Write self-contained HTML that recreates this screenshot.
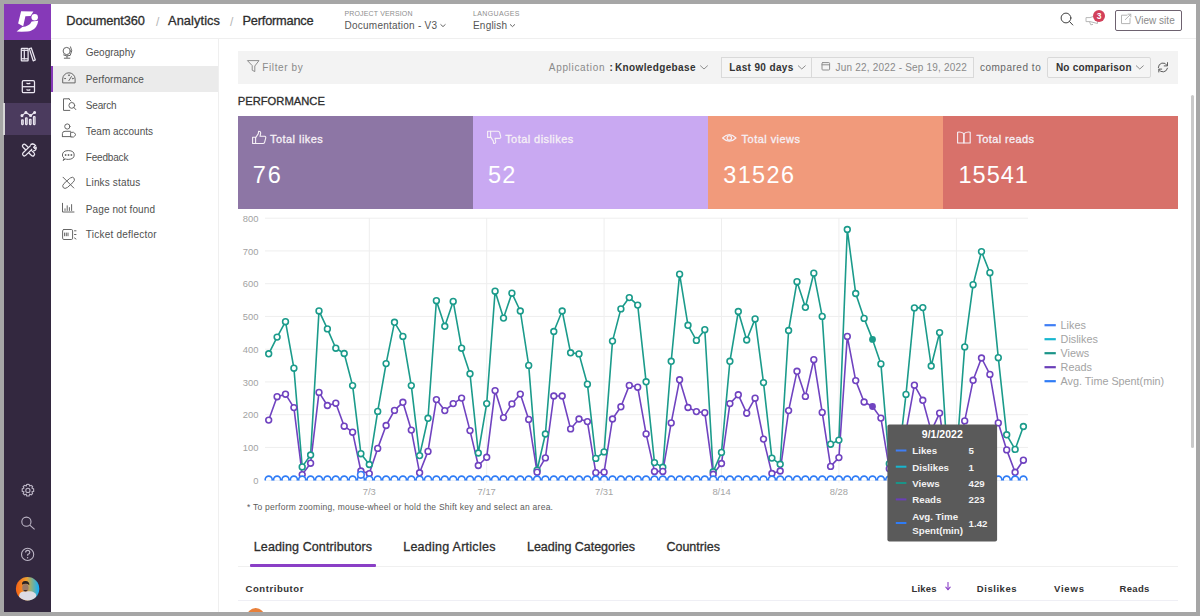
<!DOCTYPE html>
<html><head><meta charset="utf-8">
<style>
*{box-sizing:border-box;margin:0;padding:0}
html,body{width:1200px;height:616px;overflow:hidden;background:#fff;font-family:"Liberation Sans",sans-serif}
.a{position:absolute}
.t{position:absolute;white-space:nowrap;line-height:1}
</style></head><body>
<!-- frame border -->
<div class="a" style="left:0;top:0;width:1200px;height:616px;border:4px solid #a6a6a6;border-top-width:4px"></div>
<!-- rail -->
<div class="a" style="left:4px;top:4px;width:47px;height:608px;background:#33283f"></div>
<div class="a" style="left:4px;top:4px;width:47px;height:36px;background:#8639b8"></div>
<div class="a" style="left:4px;top:103px;width:47px;height:32px;background:#4b3b5e"></div>
<div class="a" style="left:3px;top:103px;width:2px;height:32px;background:#d6d6d6"></div>
<!-- header -->
<div class="a" style="left:51px;top:38px;width:1145px;height:1px;background:#efefef"></div>
<div class="a" style="left:218px;top:39px;width:1px;height:573px;background:#efefef"></div>
<div class="t" style="left:66.30px;top:15.16px;font-size:12.8px;color:#2d2d2d;letter-spacing:-0.100px;-webkit-text-stroke:0.3px currentColor;">Document360</div>
<div class="t" style="left:156.00px;top:15.84px;font-size:12px;color:#b5b5b5;">/</div>
<div class="t" style="left:168.00px;top:15.16px;font-size:12.8px;color:#2d2d2d;letter-spacing:0.098px;-webkit-text-stroke:0.3px currentColor;">Analytics</div>
<div class="t" style="left:230.00px;top:15.84px;font-size:12px;color:#b5b5b5;">/</div>
<div class="t" style="left:242.50px;top:15.16px;font-size:12.8px;color:#2d2d2d;letter-spacing:-0.208px;-webkit-text-stroke:0.3px currentColor;">Performance</div>
<div class="t" style="left:344.50px;top:10.37px;font-size:7px;color:#8e8e8e;letter-spacing:0.143px;">PROJECT VERSION</div>
<div class="t" style="left:344.50px;top:20.84px;font-size:10px;color:#555;letter-spacing:0.242px;">Documentation - V3</div>
<div class="t" style="left:473.00px;top:10.37px;font-size:7px;color:#8e8e8e;letter-spacing:0.366px;">LANGUAGES</div>
<div class="t" style="left:473.00px;top:20.84px;font-size:10px;color:#555;letter-spacing:0.200px;">English</div>
<div class="a" style="left:1115px;top:10px;width:67px;height:21px;border:1.3px solid #6e6270;border-radius:2px"></div>
<div class="t" style="left:1134.70px;top:15.54px;font-size:10px;color:#8a8a8a;letter-spacing:0.021px;">View site</div>
<!-- side nav active -->
<div class="a" style="left:52px;top:66px;width:166px;height:26px;background:#ebebeb"></div>
<div class="a" style="left:51px;top:66px;width:2px;height:26px;background:#8639b8"></div>
<div class="t" style="left:85.80px;top:48.34px;font-size:10px;color:#505050;letter-spacing:-0.010px;">Geography</div>
<div class="t" style="left:85.80px;top:74.94px;font-size:10px;color:#505050;letter-spacing:0.075px;">Performance</div>
<div class="t" style="left:85.80px;top:100.53px;font-size:10px;color:#505050;letter-spacing:-0.197px;">Search</div>
<div class="t" style="left:85.80px;top:127.13px;font-size:10px;color:#505050;letter-spacing:-0.005px;">Team accounts</div>
<div class="t" style="left:85.80px;top:152.73px;font-size:10px;color:#505050;letter-spacing:-0.188px;">Feedback</div>
<div class="t" style="left:85.80px;top:178.23px;font-size:10px;color:#505050;letter-spacing:0.154px;">Links status</div>
<div class="t" style="left:85.80px;top:204.53px;font-size:10px;color:#505050;letter-spacing:0.105px;">Page not found</div>
<div class="t" style="left:85.80px;top:230.03px;font-size:10px;color:#505050;letter-spacing:0.231px;">Ticket deflector</div>
<!-- filter bar -->
<div class="a" style="left:238px;top:51px;width:940px;height:33px;background:#f3f3f3"></div>
<div class="a" style="left:721px;top:57px;width:91px;height:21px;border:1px solid #d9d9d9;background:#f5f5f5"></div>
<div class="a" style="left:811px;top:57px;width:163px;height:21px;border:1px solid #d9d9d9;background:#f5f5f5"></div>
<div class="a" style="left:1047px;top:57px;width:104px;height:21px;border:1px solid #d9d9d9;border-radius:2px;background:#f5f5f5"></div>
<div class="t" style="left:262.30px;top:62.53px;font-size:10px;color:#8a8a8a;letter-spacing:0.605px;">Filter by</div>
<div class="t" style="left:548.80px;top:62.83px;font-size:10px;color:#8a8a8a;letter-spacing:0.678px;">Application</div>
<div class="t" style="left:609.50px;top:62.83px;font-size:10px;color:#333;font-weight:bold;">:</div>
<div class="t" style="left:615.00px;top:62.83px;font-size:10px;color:#333;font-weight:bold;letter-spacing:0.364px;">Knowledgebase</div>
<div class="t" style="left:729.30px;top:62.83px;font-size:10px;color:#333;font-weight:bold;letter-spacing:0.360px;">Last 90 days</div>
<div class="t" style="left:835.50px;top:62.83px;font-size:10px;color:#8a8a8a;letter-spacing:0.199px;">Jun 22, 2022 - Sep 19, 2022</div>
<div class="t" style="left:979.90px;top:62.83px;font-size:10px;color:#666;letter-spacing:0.521px;">compared to</div>
<div class="t" style="left:1055.90px;top:62.83px;font-size:10px;color:#333;font-weight:bold;letter-spacing:0.234px;">No comparison</div>
<!-- cards -->
<div class="a" style="left:238px;top:116px;width:235px;height:92.6px;background:#8d76a5"></div>
<div class="a" style="left:473px;top:116px;width:235px;height:92.6px;background:#c9a9f2"></div>
<div class="a" style="left:708px;top:116px;width:235px;height:92.6px;background:#f19a7b"></div>
<div class="a" style="left:943px;top:116px;width:235px;height:92.6px;background:#d8716a"></div>
<div class="t" style="left:270.00px;top:133.89px;font-size:11px;color:#f6f0f6;letter-spacing:0.450px;-webkit-text-stroke:0.3px currentColor;">Total likes</div>
<div class="t" style="left:252.80px;top:164.31px;font-size:23.5px;color:#ffffff;letter-spacing:1.860px;">76</div>
<div class="t" style="left:505.20px;top:133.89px;font-size:11px;color:#f6f0f6;letter-spacing:0.434px;-webkit-text-stroke:0.3px currentColor;">Total dislikes</div>
<div class="t" style="left:488.00px;top:164.31px;font-size:23.5px;color:#ffffff;letter-spacing:1.060px;">52</div>
<div class="t" style="left:741.60px;top:133.89px;font-size:11px;color:#f6f0f6;letter-spacing:0.460px;-webkit-text-stroke:0.3px currentColor;">Total views</div>
<div class="t" style="left:723.30px;top:164.31px;font-size:23.5px;color:#ffffff;letter-spacing:1.337px;">31526</div>
<div class="t" style="left:976.40px;top:133.89px;font-size:11px;color:#f6f0f6;letter-spacing:0.379px;-webkit-text-stroke:0.3px currentColor;">Total reads</div>
<div class="t" style="left:958.50px;top:164.31px;font-size:23.5px;color:#ffffff;letter-spacing:1.012px;">15541</div>
<div class="t" style="left:237.70px;top:96.02px;font-size:11.2px;color:#2d2d2d;letter-spacing:0.018px;-webkit-text-stroke:0.3px currentColor;">PERFORMANCE</div>
<!-- tabs -->
<div class="a" style="left:238px;top:566px;width:940px;height:1px;background:#f0f0f0"></div>
<div class="a" style="left:250px;top:564px;width:126px;height:2.5px;background:#8a3fc6;border-radius:1px"></div>
<div class="a" style="left:238px;top:600px;width:940px;height:1px;background:#efeff5"></div>
<div class="a" style="left:1191px;top:95px;width:3px;height:353px;background:#c9c9c9;border-radius:2px"></div>
<div class="t" style="left:247.00px;top:503.10px;font-size:8.5px;color:#5a5a5a;letter-spacing:0.242px;">* To perform zooming, mouse-wheel or hold the Shift key and select an area.</div>
<div class="t" style="left:253.80px;top:540.92px;font-size:12.5px;color:#2d2d2d;letter-spacing:0.113px;-webkit-text-stroke:0.3px currentColor;">Leading Contributors</div>
<div class="t" style="left:403.20px;top:540.92px;font-size:12.5px;color:#2d2d2d;letter-spacing:0.263px;-webkit-text-stroke:0.3px currentColor;">Leading Articles</div>
<div class="t" style="left:527.00px;top:540.92px;font-size:12.5px;color:#2d2d2d;letter-spacing:-0.024px;-webkit-text-stroke:0.3px currentColor;">Leading Categories</div>
<div class="t" style="left:666.40px;top:540.92px;font-size:12.5px;color:#2d2d2d;letter-spacing:0.013px;-webkit-text-stroke:0.3px currentColor;">Countries</div>
<div class="t" style="left:245.60px;top:584.46px;font-size:9.5px;color:#333;font-weight:bold;letter-spacing:0.556px;">Contributor</div>
<div class="t" style="left:911.50px;top:584.46px;font-size:9.5px;color:#333;font-weight:bold;letter-spacing:0.177px;">Likes</div>
<div class="t" style="left:976.80px;top:584.46px;font-size:9.5px;color:#333;font-weight:bold;letter-spacing:0.541px;">Dislikes</div>
<div class="t" style="left:1053.90px;top:584.46px;font-size:9.5px;color:#333;font-weight:bold;letter-spacing:0.835px;">Views</div>
<div class="t" style="left:1119.50px;top:584.46px;font-size:9.5px;color:#333;font-weight:bold;letter-spacing:0.321px;">Reads</div>
<svg class="a" style="left:0;top:0" width="1200" height="616" viewBox="0 0 1200 616" font-family="Liberation Sans, sans-serif">
<!-- logo -->
<g transform="translate(12,6) scale(0.051948)" fill="#fff">
<path d="M175,100 L412,104 L357,193 L258,195 L215,388 L118,336 Z"/>
<path d="M88,493 L198,402 Q335,398 378,300 L505,282 Q488,425 365,478 Q300,500 88,493 Z"/>
<circle cx="437" cy="215" r="62"/>
</g>
<!-- rail icons -->
<g fill="none" stroke="#ece8f2" stroke-width="1.25" stroke-linejoin="round">
 <rect x="21.3" y="48.3" width="6.8" height="12.6" rx="0.6"/>
 <line x1="24.3" y1="49.5" x2="24.3" y2="59.5"/><line x1="21.3" y1="50.3" x2="28.1" y2="50.3"/><line x1="21.3" y1="58.8" x2="28.1" y2="58.8"/>
 <path d="M29.3,48.6 L31.3,48 L35.3,60 L33.2,60.8 Z"/>
 <rect x="22.3" y="80.7" width="12.2" height="12" rx="1.3"/>
 <line x1="22.3" y1="86.7" x2="34.5" y2="86.7"/>
 <path d="M26.5,83 Q28.4,84.4 30.3,83" /><path d="M26.5,89.4 Q28.4,90.8 30.3,89.4"/>
 <path d="M22,115.6 L25.9,112.4 L30.6,115.4 L34.6,112.4" stroke-width="1.2"/>
 <circle cx="22" cy="115.6" r="0.9" fill="#ece8f2"/><circle cx="25.9" cy="112.4" r="0.9" fill="#ece8f2"/><circle cx="30.6" cy="115.4" r="0.9" fill="#ece8f2"/><circle cx="34.6" cy="112.4" r="0.9" fill="#ece8f2"/>
 <rect x="21.7" y="119.9" width="1.5" height="4.6" rx="0.4"/><rect x="25.6" y="117.9" width="1.5" height="6.6" rx="0.4"/><rect x="29.5" y="119.3" width="1.5" height="5.2" rx="0.4"/><rect x="33.5" y="116.6" width="1.5" height="7.9" rx="0.4"/>
 <rect x="20.8" y="148.3" width="15.4" height="3.6" rx="1.8" transform="rotate(44 28.5 150.1)"/>
 <rect x="21" y="148.3" width="15" height="3.6" rx="1.8" transform="rotate(-44 28.5 150.1)" fill="#33283f"/>
 <path d="M30.4,144.6 Q33.5,143 35.6,145.6 L33.6,147.2 L34.6,148.4 L36.2,147.2 Q36.6,150.8 33,151" fill="#33283f"/>
</g>
<g fill="none" stroke="#bdb6c6" stroke-width="1.1">
 <circle cx="27.9" cy="490.4" r="2.1"/>
 <path d="M27.9,484.3 L29.1,484.4 L29.6,486 L31.1,485.3 L32.6,486.5 L31.9,488 L33.6,488.9 L33.7,491.4 L32,491.9 L32.6,493.5 L31.3,494.8 L29.7,494.2 L29.1,496 L26.7,496 L26.2,494.2 L24.6,494.8 L23.2,493.5 L23.9,491.9 L22.2,491.4 L22.2,488.9 L23.9,488 L23.2,486.5 L24.7,485.3 L26.2,486 L26.7,484.4 Z"/>
 <circle cx="26.4" cy="521.7" r="4.6"/><line x1="29.8" y1="525.1" x2="34.6" y2="529.4"/>
 <circle cx="27.6" cy="554.4" r="6.1"/>
 <path d="M25.6,552.6 Q25.6,550.4 27.7,550.4 Q29.8,550.4 29.8,552.4 Q29.8,553.6 27.7,554.5 L27.7,555.8"/>
</g>
<circle cx="27.6" cy="557.7" r="0.7" fill="#bdb6c6"/>
<!-- avatar -->
<defs>
<linearGradient id="avg" x1="0" x2="1" y1="0" y2="0"><stop offset="0.1" stop-color="#f56a18"/><stop offset="0.45" stop-color="#f0a030"/><stop offset="0.65" stop-color="#8fb080"/><stop offset="0.95" stop-color="#18b0f8"/></linearGradient>
<clipPath id="avc"><circle cx="27.6" cy="588.8" r="11.7"/></clipPath>
</defs>
<g clip-path="url(#avc)">
 <rect x="15" y="576" width="25" height="25" fill="url(#avg)"/>
 <path d="M18,602 L19.5,594 Q21,591.2 25,591.2 L30,591.2 Q34.5,591.4 36,594.5 L37,602 Z" fill="#dcdce4"/>
 <ellipse cx="25.4" cy="587.8" rx="3.2" ry="4" fill="#9a7a68"/>
 <path d="M22,584.8 Q21.6,580.6 25.6,580.9 Q29.6,581.1 29.3,585.2 Q27.5,583.6 25.5,583.8 Q23.2,583.8 22,584.8 Z" fill="#2a2222"/>
 <path d="M23.4,590 Q25.4,592.4 27.6,590" fill="#3a2c28"/>
</g>
<!-- side nav icons -->
<g fill="none" stroke="#666" stroke-width="1" stroke-linecap="round" stroke-linejoin="round">
 <circle cx="66.7" cy="51" r="3.6"/><path d="M70.6,46.8 Q73.2,50.6 70.2,55.4 Q66.5,56.8 63.6,55"/><line x1="67" y1="55.6" x2="67" y2="57.6"/><line x1="64.3" y1="58.2" x2="69.8" y2="58.2"/>
 <path d="M62.7,82.5 L62.7,79 A6.2,6.2 0 0 1 75.1,79 L75.1,82.5 Z"/><line x1="68.9" y1="80.6" x2="71.4" y2="76.6"/>
 <circle cx="65" cy="78.6" r="0.35"/><circle cx="68.9" cy="75.2" r="0.35"/><circle cx="72.8" cy="78.6" r="0.35"/>
 <path d="M69.2,98.8 L63.5,98.8 L63.5,110.4 L69.8,110.4"/><path d="M68.8,98.8 L71,101"/>
 <circle cx="71.8" cy="105.4" r="2.9"/><line x1="73.9" y1="107.5" x2="75.8" y2="109.6"/>
 <circle cx="67.3" cy="126.5" r="2.6"/><path d="M62.4,136.6 L62.4,133.6 Q62.4,131.3 65,131.3 L70.5,131.3"/><path d="M62.4,136.6 L71,136.6"/>
 <path d="M71,132.3 L73.5,132.3 L76,134.6 L73.5,137 L71,137 Z"/>
 <path d="M63.3,160.2 L64.2,158.2 Q62.2,156.8 62.4,155 Q62.7,150.6 68.3,150.6 Q74.2,150.6 74.2,155 Q74.2,159.2 68.3,159.4 Q66.5,159.4 65.6,159.1 Z"/>
 <circle cx="65.4" cy="155" r="0.45" fill="#666"/><circle cx="68.3" cy="155" r="0.45" fill="#666"/><circle cx="71.2" cy="155" r="0.45" fill="#666"/>
 <path d="M63,177.2 L73.8,188"/><path d="M70.5,177.8 Q73,176.3 74.2,178.4 Q75.2,180.3 73,182.4 L67.5,187.4 Q64.8,189.4 63.2,187.6 Q61.8,185.8 64,183.5 L69.5,178.6"/>
 <path d="M62.5,203.3 L62.5,212 L74,212"/><line x1="65" y1="210.5" x2="65" y2="208.8"/><line x1="67.2" y1="210.5" x2="67.2" y2="205.8"/><line x1="69.4" y1="210.5" x2="69.4" y2="207.6"/><line x1="71.6" y1="210.5" x2="71.6" y2="204.6"/>
 <rect x="62.6" y="229.5" width="10" height="10" rx="1.3"/><line x1="64.6" y1="233" x2="64.6" y2="235.8"/><line x1="66.3" y1="233" x2="66.3" y2="235.8"/><line x1="68" y1="233" x2="68" y2="235.8"/>
 <line x1="74.5" y1="230.8" x2="76" y2="230.8"/><line x1="74.5" y1="234.5" x2="76" y2="234.5"/><line x1="74.5" y1="238" x2="76" y2="239"/>
</g>
<!-- header icons -->
<g fill="none" stroke="#404040" stroke-width="1.0" stroke-linecap="round">
 <circle cx="1066" cy="18" r="4.9"/><line x1="1069.6" y1="21.6" x2="1072.8" y2="25"/>
</g>
<g fill="none" stroke="#b8b8b8" stroke-width="1" stroke-linejoin="round">
 <path d="M1086,17.6 L1090,17.6 L1097.5,15 L1097.5,23.5 L1090,21.6 L1086,21.6 Z"/><path d="M1089.5,21.8 L1090.8,24.8 L1093,24.4"/>
</g>
<circle cx="1099" cy="16" r="6" fill="#d2405a"/>
<text x="1099" y="19" text-anchor="middle" font-size="8.5" font-weight="bold" fill="#fff">3</text>
<g fill="none" stroke="#b5b5b5" stroke-width="1" stroke-linecap="round">
 <path d="M1127,15.2 L1121.5,15.2 L1121.5,23.6 L1130,23.6 L1130,18.5"/><path d="M1125.3,19.6 L1130.8,14.2 M1128,14.2 L1130.8,14.2 L1130.8,17"/>
</g>
<g fill="none" stroke="#666" stroke-width="1" stroke-linecap="round" stroke-linejoin="round">
 <path d="M440.8,24.6 L443,26.6 L445.2,24.6"/><path d="M510.3,24.6 L512.5,26.6 L514.7,24.6"/>
</g>
<!-- filter icons -->
<g fill="none" stroke="#8e8e8e" stroke-width="1" stroke-linejoin="round" stroke-linecap="round">
 <path d="M247.8,60.6 L259,60.6 L254.8,66 L254.8,71.6 L252.2,70.2 L252.2,66 Z"/>
 <path d="M700.5,65.8 L704,69 L707.5,65.8"/>
 <path d="M798.3,65.8 L801.8,69 L805.3,65.8"/>
 <rect x="822" y="62.6" width="7.6" height="7.4" rx="0.8"/><line x1="822" y1="64.8" x2="829.6" y2="64.8"/>
 <path d="M1136.3,65.8 L1139.8,69 L1143.3,65.8"/>
</g>
<g fill="none" stroke="#555" stroke-width="0.95" stroke-linecap="round" stroke-linejoin="round">
 <path d="M1158.3,67.6 A4.7,4.7 0 0 1 1167.1,65.4"/><path d="M1167.5,62.6 L1167.5,65.9 L1164.2,65.9"/>
 <path d="M1167.5,68.2 A4.7,4.7 0 0 1 1158.9,69.6"/><path d="M1158.8,72 L1158.8,69.1 L1161.7,69.1"/>
</g>
<!-- card icons -->
<g fill="none" stroke="#f6f0f6" stroke-width="1.1" stroke-linejoin="round" stroke-linecap="round">
 <rect x="252.6" y="137.3" width="3" height="6.2"/>
 <path d="M255.6,137.8 L258.3,133.6 L258.6,131.2 Q260.6,131 260.7,133.2 L260,136.3 L264.6,136.3 Q266.2,136.6 265.7,138.2 L264.6,142.3 Q264.2,143.5 263,143.5 L255.6,143.5"/>
 <rect x="487.6" y="131.2" width="3" height="6.2"/>
 <path d="M490.6,136.9 L493.3,141.1 L493.6,143.5 Q495.6,143.7 495.7,141.5 L495,138.4 L499.6,138.4 Q501.2,138.1 500.7,136.5 L499.6,132.4 Q499.2,131.2 498,131.2 L490.6,131.2"/>
 <path d="M722.6,138 Q729.3,131.2 736,138 Q729.3,144.4 722.6,138 Z"/><circle cx="729.3" cy="137.9" r="2.2"/>
 <path d="M957.6,132.2 L957.6,143 L963.9,143 L963.9,133.6 Q961,131.5 957.6,132.2 Z"/><path d="M970.2,132.2 L970.2,143 L963.9,143 L963.9,133.6 Q966.8,131.5 970.2,132.2 Z"/>
</g>
<!-- table sort arrow -->
<g stroke="#8a3fc6" stroke-width="1.1" fill="none" stroke-linecap="round">
 <line x1="948" y1="582.5" x2="948" y2="589.3"/><path d="M945.8,587.2 L948,589.6 L950.2,587.2"/>
</g>
<!-- row avatar -->
<clipPath id="ravc"><rect x="238" y="601" width="60" height="11"/></clipPath>
<circle cx="255.7" cy="617" r="9" fill="#e8803a" clip-path="url(#ravc)"/>

<defs><clipPath id="pc"><rect x="250" y="210" width="790" height="270.4"/></clipPath></defs>
<line x1="265" x2="1028" y1="480.2" y2="480.2" stroke="#eeeeee" stroke-width="1"/>
<text x="258.4" y="483.8" text-anchor="end" font-size="9.4" fill="#a2a2a2">0</text>
<line x1="265" x2="1028" y1="447.4" y2="447.4" stroke="#eeeeee" stroke-width="1"/>
<text x="258.4" y="451.1" text-anchor="end" font-size="9.4" fill="#a2a2a2">100</text>
<line x1="265" x2="1028" y1="414.7" y2="414.7" stroke="#eeeeee" stroke-width="1"/>
<text x="258.4" y="418.3" text-anchor="end" font-size="9.4" fill="#a2a2a2">200</text>
<line x1="265" x2="1028" y1="381.9" y2="381.9" stroke="#eeeeee" stroke-width="1"/>
<text x="258.4" y="385.6" text-anchor="end" font-size="9.4" fill="#a2a2a2">300</text>
<line x1="265" x2="1028" y1="349.2" y2="349.2" stroke="#eeeeee" stroke-width="1"/>
<text x="258.4" y="352.8" text-anchor="end" font-size="9.4" fill="#a2a2a2">400</text>
<line x1="265" x2="1028" y1="316.4" y2="316.4" stroke="#eeeeee" stroke-width="1"/>
<text x="258.4" y="320.1" text-anchor="end" font-size="9.4" fill="#a2a2a2">500</text>
<line x1="265" x2="1028" y1="283.7" y2="283.7" stroke="#eeeeee" stroke-width="1"/>
<text x="258.4" y="287.3" text-anchor="end" font-size="9.4" fill="#a2a2a2">600</text>
<line x1="265" x2="1028" y1="250.9" y2="250.9" stroke="#eeeeee" stroke-width="1"/>
<text x="258.4" y="254.5" text-anchor="end" font-size="9.4" fill="#a2a2a2">700</text>
<line x1="265" x2="1028" y1="218.2" y2="218.2" stroke="#eeeeee" stroke-width="1"/>
<text x="258.4" y="221.8" text-anchor="end" font-size="9.4" fill="#a2a2a2">800</text>
<line x1="369.3" x2="369.3" y1="218" y2="483" stroke="#eeeeee" stroke-width="1"/>
<text x="369.3" y="495.3" text-anchor="middle" font-size="9.4" fill="#a4a4a4">7/3</text>
<line x1="486.7" x2="486.7" y1="218" y2="483" stroke="#eeeeee" stroke-width="1"/>
<text x="486.7" y="495.3" text-anchor="middle" font-size="9.4" fill="#a4a4a4">7/17</text>
<line x1="604.1" x2="604.1" y1="218" y2="483" stroke="#eeeeee" stroke-width="1"/>
<text x="604.1" y="495.3" text-anchor="middle" font-size="9.4" fill="#a4a4a4">7/31</text>
<line x1="721.5" x2="721.5" y1="218" y2="483" stroke="#eeeeee" stroke-width="1"/>
<text x="721.5" y="495.3" text-anchor="middle" font-size="9.4" fill="#a4a4a4">8/14</text>
<line x1="838.9" x2="838.9" y1="218" y2="483" stroke="#eeeeee" stroke-width="1"/>
<text x="838.9" y="495.3" text-anchor="middle" font-size="9.4" fill="#a4a4a4">8/28</text>
<line x1="956.4" x2="956.4" y1="218" y2="483" stroke="#eeeeee" stroke-width="1"/>
<g clip-path="url(#pc)">
<path d="M268.7,479.6 L277.1,479.6 L285.5,479.6 L293.9,479.6 L302.2,479.6 L310.6,479.6 L319.0,479.6 L327.4,479.6 L335.8,479.6 L344.2,479.6 L352.6,479.6 L360.9,479.6 L369.3,479.6 L377.7,479.6 L386.1,479.6 L394.5,479.6 L402.9,479.6 L411.3,479.6 L419.6,479.6 L428.0,479.6 L436.4,479.6 L444.8,479.6 L453.2,479.6 L461.6,479.6 L470.0,479.6 L478.3,479.6 L486.7,479.6 L495.1,479.6 L503.5,479.6 L511.9,479.6 L520.3,479.6 L528.7,479.6 L537.1,479.6 L545.4,479.6 L553.8,479.6 L562.2,479.6 L570.6,479.6 L579.0,479.6 L587.4,479.6 L595.8,479.6 L604.1,479.6 L612.5,479.6 L620.9,479.6 L629.3,479.6 L637.7,479.6 L646.1,479.6 L654.5,479.6 L662.8,479.6 L671.2,479.6 L679.6,479.6 L688.0,479.6 L696.4,479.6 L704.8,479.6 L713.2,479.6 L721.5,479.6 L729.9,479.6 L738.3,479.6 L746.7,479.6 L755.1,479.6 L763.5,479.6 L771.9,479.6 L780.2,479.6 L788.6,479.6 L797.0,479.6 L805.4,479.6 L813.8,479.6 L822.2,479.6 L830.6,479.6 L838.9,479.6 L847.3,479.6 L855.7,479.6 L864.1,479.6 L872.5,479.6 L880.9,479.6 L889.3,479.6 L897.6,479.6 L906.0,479.6 L914.4,479.6 L922.8,479.6 L931.2,479.6 L939.6,479.6 L948.0,479.6 L956.4,479.6 L964.7,479.6 L973.1,479.6 L981.5,479.6 L989.9,479.6 L998.3,479.6 L1006.7,479.6 L1015.1,479.6 L1023.4,479.6" fill="none" stroke="#2f7cf6" stroke-width="1.2" stroke-linejoin="round"/>
<path d="M268.7,353.8 L277.1,337.1 L285.5,321.7 L293.9,368.2 L302.2,466.9 L310.6,455.0 L319.0,310.9 L327.4,328.9 L335.8,348.2 L344.2,353.5 L352.6,385.6 L360.9,453.7 L369.3,464.5 L377.7,411.4 L386.1,363.6 L394.5,322.3 L402.9,336.4 L411.3,385.6 L419.6,455.6 L428.0,418.3 L436.4,300.7 L444.8,326.3 L453.2,301.4 L461.6,348.2 L470.0,373.8 L478.3,453.0 L486.7,403.6 L495.1,291.2 L503.5,318.1 L511.9,293.2 L520.3,311.0 L528.7,365.4 L537.1,470.2 L545.4,434.0 L553.8,331.5 L562.2,311.0 L570.6,352.8 L579.0,353.9 L587.4,384.2 L595.8,458.4 L604.1,451.9 L612.5,341.1 L620.9,308.9 L629.3,297.6 L637.7,305.1 L646.1,381.8 L654.5,462.6 L662.8,467.3 L671.2,361.3 L679.6,274.2 L688.0,325.3 L696.4,340.4 L704.8,329.7 L713.2,471.8 L721.5,452.4 L729.9,361.3 L738.3,311.5 L746.7,340.0 L755.1,318.9 L763.5,382.6 L771.9,458.1 L780.2,464.3 L788.6,330.5 L797.0,281.7 L805.4,307.3 L813.8,273.2 L822.2,316.4 L830.6,444.2 L838.9,440.1 L847.3,229.5 L855.7,293.5 L864.1,318.4 L872.5,339.4 L880.9,363.9 L889.3,463.8 L897.6,467.1 L906.0,394.4 L914.4,307.9 L922.8,307.6 L931.2,366.0 L939.6,332.6 L948.0,467.1 L956.4,457.3 L964.7,346.9 L973.1,284.7 L981.5,251.6 L989.9,272.7 L998.3,357.7 L1006.7,434.8 L1015.1,449.4 L1023.4,426.5" fill="none" stroke="#1b9b8b" stroke-width="1.6" stroke-linejoin="round"/>
<path d="M268.7,420.1 L277.1,396.7 L285.5,394.2 L293.9,407.6 L302.2,474.6 L310.6,463.2 L319.0,392.4 L327.4,405.5 L335.8,403.2 L344.2,426.2 L352.6,432.2 L360.9,471.0 L369.3,473.6 L377.7,448.4 L386.1,425.5 L394.5,410.4 L402.9,402.3 L411.3,430.1 L419.6,472.8 L428.0,451.4 L436.4,399.6 L444.8,410.6 L453.2,403.6 L461.6,398.1 L470.0,430.6 L478.3,465.5 L486.7,457.3 L495.1,390.6 L503.5,417.6 L511.9,403.9 L520.3,394.1 L528.7,419.4 L537.1,472.2 L545.4,457.9 L553.8,396.0 L562.2,396.0 L570.6,428.9 L579.0,419.0 L587.4,421.6 L595.8,472.7 L604.1,472.2 L612.5,419.0 L620.9,406.8 L629.3,385.4 L637.7,387.2 L646.1,433.9 L654.5,471.4 L662.8,471.4 L671.2,422.9 L679.6,379.8 L688.0,407.5 L696.4,411.6 L704.8,412.7 L713.2,474.3 L721.5,463.5 L729.9,403.6 L738.3,394.8 L746.7,413.2 L755.1,398.2 L763.5,439.1 L771.9,473.5 L780.2,471.0 L788.6,410.6 L797.0,371.3 L805.4,396.4 L813.8,359.7 L822.2,412.4 L830.6,466.4 L838.9,457.6 L847.3,336.4 L855.7,380.6 L864.1,402.0 L872.5,406.5 L880.9,418.1 L889.3,468.7 L897.6,473.6 L906.0,431.1 L914.4,385.2 L922.8,400.3 L931.2,431.1 L939.6,413.1 L948.0,472.0 L956.4,463.8 L964.7,420.9 L973.1,380.3 L981.5,358.0 L989.9,374.4 L998.3,422.9 L1006.7,449.9 L1015.1,472.3 L1023.4,460.2" fill="none" stroke="#7043c0" stroke-width="1.6" stroke-linejoin="round"/>
<circle cx="268.7" cy="353.8" r="2.9" fill="#fff" stroke="#1b9b8b" stroke-width="1.6"/><circle cx="277.1" cy="337.1" r="2.9" fill="#fff" stroke="#1b9b8b" stroke-width="1.6"/><circle cx="285.5" cy="321.7" r="2.9" fill="#fff" stroke="#1b9b8b" stroke-width="1.6"/><circle cx="293.9" cy="368.2" r="2.9" fill="#fff" stroke="#1b9b8b" stroke-width="1.6"/><circle cx="302.2" cy="466.9" r="2.9" fill="#fff" stroke="#1b9b8b" stroke-width="1.6"/><circle cx="310.6" cy="455.0" r="2.9" fill="#fff" stroke="#1b9b8b" stroke-width="1.6"/><circle cx="319.0" cy="310.9" r="2.9" fill="#fff" stroke="#1b9b8b" stroke-width="1.6"/><circle cx="327.4" cy="328.9" r="2.9" fill="#fff" stroke="#1b9b8b" stroke-width="1.6"/><circle cx="335.8" cy="348.2" r="2.9" fill="#fff" stroke="#1b9b8b" stroke-width="1.6"/><circle cx="344.2" cy="353.5" r="2.9" fill="#fff" stroke="#1b9b8b" stroke-width="1.6"/><circle cx="352.6" cy="385.6" r="2.9" fill="#fff" stroke="#1b9b8b" stroke-width="1.6"/><circle cx="360.9" cy="453.7" r="2.9" fill="#fff" stroke="#1b9b8b" stroke-width="1.6"/><circle cx="369.3" cy="464.5" r="2.9" fill="#fff" stroke="#1b9b8b" stroke-width="1.6"/><circle cx="377.7" cy="411.4" r="2.9" fill="#fff" stroke="#1b9b8b" stroke-width="1.6"/><circle cx="386.1" cy="363.6" r="2.9" fill="#fff" stroke="#1b9b8b" stroke-width="1.6"/><circle cx="394.5" cy="322.3" r="2.9" fill="#fff" stroke="#1b9b8b" stroke-width="1.6"/><circle cx="402.9" cy="336.4" r="2.9" fill="#fff" stroke="#1b9b8b" stroke-width="1.6"/><circle cx="411.3" cy="385.6" r="2.9" fill="#fff" stroke="#1b9b8b" stroke-width="1.6"/><circle cx="419.6" cy="455.6" r="2.9" fill="#fff" stroke="#1b9b8b" stroke-width="1.6"/><circle cx="428.0" cy="418.3" r="2.9" fill="#fff" stroke="#1b9b8b" stroke-width="1.6"/><circle cx="436.4" cy="300.7" r="2.9" fill="#fff" stroke="#1b9b8b" stroke-width="1.6"/><circle cx="444.8" cy="326.3" r="2.9" fill="#fff" stroke="#1b9b8b" stroke-width="1.6"/><circle cx="453.2" cy="301.4" r="2.9" fill="#fff" stroke="#1b9b8b" stroke-width="1.6"/><circle cx="461.6" cy="348.2" r="2.9" fill="#fff" stroke="#1b9b8b" stroke-width="1.6"/><circle cx="470.0" cy="373.8" r="2.9" fill="#fff" stroke="#1b9b8b" stroke-width="1.6"/><circle cx="478.3" cy="453.0" r="2.9" fill="#fff" stroke="#1b9b8b" stroke-width="1.6"/><circle cx="486.7" cy="403.6" r="2.9" fill="#fff" stroke="#1b9b8b" stroke-width="1.6"/><circle cx="495.1" cy="291.2" r="2.9" fill="#fff" stroke="#1b9b8b" stroke-width="1.6"/><circle cx="503.5" cy="318.1" r="2.9" fill="#fff" stroke="#1b9b8b" stroke-width="1.6"/><circle cx="511.9" cy="293.2" r="2.9" fill="#fff" stroke="#1b9b8b" stroke-width="1.6"/><circle cx="520.3" cy="311.0" r="2.9" fill="#fff" stroke="#1b9b8b" stroke-width="1.6"/><circle cx="528.7" cy="365.4" r="2.9" fill="#fff" stroke="#1b9b8b" stroke-width="1.6"/><circle cx="537.1" cy="470.2" r="2.9" fill="#fff" stroke="#1b9b8b" stroke-width="1.6"/><circle cx="545.4" cy="434.0" r="2.9" fill="#fff" stroke="#1b9b8b" stroke-width="1.6"/><circle cx="553.8" cy="331.5" r="2.9" fill="#fff" stroke="#1b9b8b" stroke-width="1.6"/><circle cx="562.2" cy="311.0" r="2.9" fill="#fff" stroke="#1b9b8b" stroke-width="1.6"/><circle cx="570.6" cy="352.8" r="2.9" fill="#fff" stroke="#1b9b8b" stroke-width="1.6"/><circle cx="579.0" cy="353.9" r="2.9" fill="#fff" stroke="#1b9b8b" stroke-width="1.6"/><circle cx="587.4" cy="384.2" r="2.9" fill="#fff" stroke="#1b9b8b" stroke-width="1.6"/><circle cx="595.8" cy="458.4" r="2.9" fill="#fff" stroke="#1b9b8b" stroke-width="1.6"/><circle cx="604.1" cy="451.9" r="2.9" fill="#fff" stroke="#1b9b8b" stroke-width="1.6"/><circle cx="612.5" cy="341.1" r="2.9" fill="#fff" stroke="#1b9b8b" stroke-width="1.6"/><circle cx="620.9" cy="308.9" r="2.9" fill="#fff" stroke="#1b9b8b" stroke-width="1.6"/><circle cx="629.3" cy="297.6" r="2.9" fill="#fff" stroke="#1b9b8b" stroke-width="1.6"/><circle cx="637.7" cy="305.1" r="2.9" fill="#fff" stroke="#1b9b8b" stroke-width="1.6"/><circle cx="646.1" cy="381.8" r="2.9" fill="#fff" stroke="#1b9b8b" stroke-width="1.6"/><circle cx="654.5" cy="462.6" r="2.9" fill="#fff" stroke="#1b9b8b" stroke-width="1.6"/><circle cx="662.8" cy="467.3" r="2.9" fill="#fff" stroke="#1b9b8b" stroke-width="1.6"/><circle cx="671.2" cy="361.3" r="2.9" fill="#fff" stroke="#1b9b8b" stroke-width="1.6"/><circle cx="679.6" cy="274.2" r="2.9" fill="#fff" stroke="#1b9b8b" stroke-width="1.6"/><circle cx="688.0" cy="325.3" r="2.9" fill="#fff" stroke="#1b9b8b" stroke-width="1.6"/><circle cx="696.4" cy="340.4" r="2.9" fill="#fff" stroke="#1b9b8b" stroke-width="1.6"/><circle cx="704.8" cy="329.7" r="2.9" fill="#fff" stroke="#1b9b8b" stroke-width="1.6"/><circle cx="713.2" cy="471.8" r="2.9" fill="#fff" stroke="#1b9b8b" stroke-width="1.6"/><circle cx="721.5" cy="452.4" r="2.9" fill="#fff" stroke="#1b9b8b" stroke-width="1.6"/><circle cx="729.9" cy="361.3" r="2.9" fill="#fff" stroke="#1b9b8b" stroke-width="1.6"/><circle cx="738.3" cy="311.5" r="2.9" fill="#fff" stroke="#1b9b8b" stroke-width="1.6"/><circle cx="746.7" cy="340.0" r="2.9" fill="#fff" stroke="#1b9b8b" stroke-width="1.6"/><circle cx="755.1" cy="318.9" r="2.9" fill="#fff" stroke="#1b9b8b" stroke-width="1.6"/><circle cx="763.5" cy="382.6" r="2.9" fill="#fff" stroke="#1b9b8b" stroke-width="1.6"/><circle cx="771.9" cy="458.1" r="2.9" fill="#fff" stroke="#1b9b8b" stroke-width="1.6"/><circle cx="780.2" cy="464.3" r="2.9" fill="#fff" stroke="#1b9b8b" stroke-width="1.6"/><circle cx="788.6" cy="330.5" r="2.9" fill="#fff" stroke="#1b9b8b" stroke-width="1.6"/><circle cx="797.0" cy="281.7" r="2.9" fill="#fff" stroke="#1b9b8b" stroke-width="1.6"/><circle cx="805.4" cy="307.3" r="2.9" fill="#fff" stroke="#1b9b8b" stroke-width="1.6"/><circle cx="813.8" cy="273.2" r="2.9" fill="#fff" stroke="#1b9b8b" stroke-width="1.6"/><circle cx="822.2" cy="316.4" r="2.9" fill="#fff" stroke="#1b9b8b" stroke-width="1.6"/><circle cx="830.6" cy="444.2" r="2.9" fill="#fff" stroke="#1b9b8b" stroke-width="1.6"/><circle cx="838.9" cy="440.1" r="2.9" fill="#fff" stroke="#1b9b8b" stroke-width="1.6"/><circle cx="847.3" cy="229.5" r="2.9" fill="#fff" stroke="#1b9b8b" stroke-width="1.6"/><circle cx="855.7" cy="293.5" r="2.9" fill="#fff" stroke="#1b9b8b" stroke-width="1.6"/><circle cx="864.1" cy="318.4" r="2.9" fill="#fff" stroke="#1b9b8b" stroke-width="1.6"/><circle cx="872.5" cy="339.4" r="3.4" fill="#1b9b8b"/><circle cx="880.9" cy="363.9" r="2.9" fill="#fff" stroke="#1b9b8b" stroke-width="1.6"/><circle cx="889.3" cy="463.8" r="2.9" fill="#fff" stroke="#1b9b8b" stroke-width="1.6"/><circle cx="897.6" cy="467.1" r="2.9" fill="#fff" stroke="#1b9b8b" stroke-width="1.6"/><circle cx="906.0" cy="394.4" r="2.9" fill="#fff" stroke="#1b9b8b" stroke-width="1.6"/><circle cx="914.4" cy="307.9" r="2.9" fill="#fff" stroke="#1b9b8b" stroke-width="1.6"/><circle cx="922.8" cy="307.6" r="2.9" fill="#fff" stroke="#1b9b8b" stroke-width="1.6"/><circle cx="931.2" cy="366.0" r="2.9" fill="#fff" stroke="#1b9b8b" stroke-width="1.6"/><circle cx="939.6" cy="332.6" r="2.9" fill="#fff" stroke="#1b9b8b" stroke-width="1.6"/><circle cx="948.0" cy="467.1" r="2.9" fill="#fff" stroke="#1b9b8b" stroke-width="1.6"/><circle cx="956.4" cy="457.3" r="2.9" fill="#fff" stroke="#1b9b8b" stroke-width="1.6"/><circle cx="964.7" cy="346.9" r="2.9" fill="#fff" stroke="#1b9b8b" stroke-width="1.6"/><circle cx="973.1" cy="284.7" r="2.9" fill="#fff" stroke="#1b9b8b" stroke-width="1.6"/><circle cx="981.5" cy="251.6" r="2.9" fill="#fff" stroke="#1b9b8b" stroke-width="1.6"/><circle cx="989.9" cy="272.7" r="2.9" fill="#fff" stroke="#1b9b8b" stroke-width="1.6"/><circle cx="998.3" cy="357.7" r="2.9" fill="#fff" stroke="#1b9b8b" stroke-width="1.6"/><circle cx="1006.7" cy="434.8" r="2.9" fill="#fff" stroke="#1b9b8b" stroke-width="1.6"/><circle cx="1015.1" cy="449.4" r="2.9" fill="#fff" stroke="#1b9b8b" stroke-width="1.6"/><circle cx="1023.4" cy="426.5" r="2.9" fill="#fff" stroke="#1b9b8b" stroke-width="1.6"/>
<circle cx="268.7" cy="420.1" r="2.9" fill="#fff" stroke="#7043c0" stroke-width="1.6"/><circle cx="277.1" cy="396.7" r="2.9" fill="#fff" stroke="#7043c0" stroke-width="1.6"/><circle cx="285.5" cy="394.2" r="2.9" fill="#fff" stroke="#7043c0" stroke-width="1.6"/><circle cx="293.9" cy="407.6" r="2.9" fill="#fff" stroke="#7043c0" stroke-width="1.6"/><circle cx="302.2" cy="474.6" r="2.9" fill="#fff" stroke="#7043c0" stroke-width="1.6"/><circle cx="310.6" cy="463.2" r="2.9" fill="#fff" stroke="#7043c0" stroke-width="1.6"/><circle cx="319.0" cy="392.4" r="2.9" fill="#fff" stroke="#7043c0" stroke-width="1.6"/><circle cx="327.4" cy="405.5" r="2.9" fill="#fff" stroke="#7043c0" stroke-width="1.6"/><circle cx="335.8" cy="403.2" r="2.9" fill="#fff" stroke="#7043c0" stroke-width="1.6"/><circle cx="344.2" cy="426.2" r="2.9" fill="#fff" stroke="#7043c0" stroke-width="1.6"/><circle cx="352.6" cy="432.2" r="2.9" fill="#fff" stroke="#7043c0" stroke-width="1.6"/><circle cx="360.9" cy="471.0" r="2.9" fill="#fff" stroke="#7043c0" stroke-width="1.6"/><circle cx="369.3" cy="473.6" r="2.9" fill="#fff" stroke="#7043c0" stroke-width="1.6"/><circle cx="377.7" cy="448.4" r="2.9" fill="#fff" stroke="#7043c0" stroke-width="1.6"/><circle cx="386.1" cy="425.5" r="2.9" fill="#fff" stroke="#7043c0" stroke-width="1.6"/><circle cx="394.5" cy="410.4" r="2.9" fill="#fff" stroke="#7043c0" stroke-width="1.6"/><circle cx="402.9" cy="402.3" r="2.9" fill="#fff" stroke="#7043c0" stroke-width="1.6"/><circle cx="411.3" cy="430.1" r="2.9" fill="#fff" stroke="#7043c0" stroke-width="1.6"/><circle cx="419.6" cy="472.8" r="2.9" fill="#fff" stroke="#7043c0" stroke-width="1.6"/><circle cx="428.0" cy="451.4" r="2.9" fill="#fff" stroke="#7043c0" stroke-width="1.6"/><circle cx="436.4" cy="399.6" r="2.9" fill="#fff" stroke="#7043c0" stroke-width="1.6"/><circle cx="444.8" cy="410.6" r="2.9" fill="#fff" stroke="#7043c0" stroke-width="1.6"/><circle cx="453.2" cy="403.6" r="2.9" fill="#fff" stroke="#7043c0" stroke-width="1.6"/><circle cx="461.6" cy="398.1" r="2.9" fill="#fff" stroke="#7043c0" stroke-width="1.6"/><circle cx="470.0" cy="430.6" r="2.9" fill="#fff" stroke="#7043c0" stroke-width="1.6"/><circle cx="478.3" cy="465.5" r="2.9" fill="#fff" stroke="#7043c0" stroke-width="1.6"/><circle cx="486.7" cy="457.3" r="2.9" fill="#fff" stroke="#7043c0" stroke-width="1.6"/><circle cx="495.1" cy="390.6" r="2.9" fill="#fff" stroke="#7043c0" stroke-width="1.6"/><circle cx="503.5" cy="417.6" r="2.9" fill="#fff" stroke="#7043c0" stroke-width="1.6"/><circle cx="511.9" cy="403.9" r="2.9" fill="#fff" stroke="#7043c0" stroke-width="1.6"/><circle cx="520.3" cy="394.1" r="2.9" fill="#fff" stroke="#7043c0" stroke-width="1.6"/><circle cx="528.7" cy="419.4" r="2.9" fill="#fff" stroke="#7043c0" stroke-width="1.6"/><circle cx="537.1" cy="472.2" r="2.9" fill="#fff" stroke="#7043c0" stroke-width="1.6"/><circle cx="545.4" cy="457.9" r="2.9" fill="#fff" stroke="#7043c0" stroke-width="1.6"/><circle cx="553.8" cy="396.0" r="2.9" fill="#fff" stroke="#7043c0" stroke-width="1.6"/><circle cx="562.2" cy="396.0" r="2.9" fill="#fff" stroke="#7043c0" stroke-width="1.6"/><circle cx="570.6" cy="428.9" r="2.9" fill="#fff" stroke="#7043c0" stroke-width="1.6"/><circle cx="579.0" cy="419.0" r="2.9" fill="#fff" stroke="#7043c0" stroke-width="1.6"/><circle cx="587.4" cy="421.6" r="2.9" fill="#fff" stroke="#7043c0" stroke-width="1.6"/><circle cx="595.8" cy="472.7" r="2.9" fill="#fff" stroke="#7043c0" stroke-width="1.6"/><circle cx="604.1" cy="472.2" r="2.9" fill="#fff" stroke="#7043c0" stroke-width="1.6"/><circle cx="612.5" cy="419.0" r="2.9" fill="#fff" stroke="#7043c0" stroke-width="1.6"/><circle cx="620.9" cy="406.8" r="2.9" fill="#fff" stroke="#7043c0" stroke-width="1.6"/><circle cx="629.3" cy="385.4" r="2.9" fill="#fff" stroke="#7043c0" stroke-width="1.6"/><circle cx="637.7" cy="387.2" r="2.9" fill="#fff" stroke="#7043c0" stroke-width="1.6"/><circle cx="646.1" cy="433.9" r="2.9" fill="#fff" stroke="#7043c0" stroke-width="1.6"/><circle cx="654.5" cy="471.4" r="2.9" fill="#fff" stroke="#7043c0" stroke-width="1.6"/><circle cx="662.8" cy="471.4" r="2.9" fill="#fff" stroke="#7043c0" stroke-width="1.6"/><circle cx="671.2" cy="422.9" r="2.9" fill="#fff" stroke="#7043c0" stroke-width="1.6"/><circle cx="679.6" cy="379.8" r="2.9" fill="#fff" stroke="#7043c0" stroke-width="1.6"/><circle cx="688.0" cy="407.5" r="2.9" fill="#fff" stroke="#7043c0" stroke-width="1.6"/><circle cx="696.4" cy="411.6" r="2.9" fill="#fff" stroke="#7043c0" stroke-width="1.6"/><circle cx="704.8" cy="412.7" r="2.9" fill="#fff" stroke="#7043c0" stroke-width="1.6"/><circle cx="713.2" cy="474.3" r="2.9" fill="#fff" stroke="#7043c0" stroke-width="1.6"/><circle cx="721.5" cy="463.5" r="2.9" fill="#fff" stroke="#7043c0" stroke-width="1.6"/><circle cx="729.9" cy="403.6" r="2.9" fill="#fff" stroke="#7043c0" stroke-width="1.6"/><circle cx="738.3" cy="394.8" r="2.9" fill="#fff" stroke="#7043c0" stroke-width="1.6"/><circle cx="746.7" cy="413.2" r="2.9" fill="#fff" stroke="#7043c0" stroke-width="1.6"/><circle cx="755.1" cy="398.2" r="2.9" fill="#fff" stroke="#7043c0" stroke-width="1.6"/><circle cx="763.5" cy="439.1" r="2.9" fill="#fff" stroke="#7043c0" stroke-width="1.6"/><circle cx="771.9" cy="473.5" r="2.9" fill="#fff" stroke="#7043c0" stroke-width="1.6"/><circle cx="780.2" cy="471.0" r="2.9" fill="#fff" stroke="#7043c0" stroke-width="1.6"/><circle cx="788.6" cy="410.6" r="2.9" fill="#fff" stroke="#7043c0" stroke-width="1.6"/><circle cx="797.0" cy="371.3" r="2.9" fill="#fff" stroke="#7043c0" stroke-width="1.6"/><circle cx="805.4" cy="396.4" r="2.9" fill="#fff" stroke="#7043c0" stroke-width="1.6"/><circle cx="813.8" cy="359.7" r="2.9" fill="#fff" stroke="#7043c0" stroke-width="1.6"/><circle cx="822.2" cy="412.4" r="2.9" fill="#fff" stroke="#7043c0" stroke-width="1.6"/><circle cx="830.6" cy="466.4" r="2.9" fill="#fff" stroke="#7043c0" stroke-width="1.6"/><circle cx="838.9" cy="457.6" r="2.9" fill="#fff" stroke="#7043c0" stroke-width="1.6"/><circle cx="847.3" cy="336.4" r="2.9" fill="#fff" stroke="#7043c0" stroke-width="1.6"/><circle cx="855.7" cy="380.6" r="2.9" fill="#fff" stroke="#7043c0" stroke-width="1.6"/><circle cx="864.1" cy="402.0" r="2.9" fill="#fff" stroke="#7043c0" stroke-width="1.6"/><circle cx="872.5" cy="406.5" r="3.4" fill="#7043c0"/><circle cx="880.9" cy="418.1" r="2.9" fill="#fff" stroke="#7043c0" stroke-width="1.6"/><circle cx="889.3" cy="468.7" r="2.9" fill="#fff" stroke="#7043c0" stroke-width="1.6"/><circle cx="897.6" cy="473.6" r="2.9" fill="#fff" stroke="#7043c0" stroke-width="1.6"/><circle cx="906.0" cy="431.1" r="2.9" fill="#fff" stroke="#7043c0" stroke-width="1.6"/><circle cx="914.4" cy="385.2" r="2.9" fill="#fff" stroke="#7043c0" stroke-width="1.6"/><circle cx="922.8" cy="400.3" r="2.9" fill="#fff" stroke="#7043c0" stroke-width="1.6"/><circle cx="931.2" cy="431.1" r="2.9" fill="#fff" stroke="#7043c0" stroke-width="1.6"/><circle cx="939.6" cy="413.1" r="2.9" fill="#fff" stroke="#7043c0" stroke-width="1.6"/><circle cx="948.0" cy="472.0" r="2.9" fill="#fff" stroke="#7043c0" stroke-width="1.6"/><circle cx="956.4" cy="463.8" r="2.9" fill="#fff" stroke="#7043c0" stroke-width="1.6"/><circle cx="964.7" cy="420.9" r="2.9" fill="#fff" stroke="#7043c0" stroke-width="1.6"/><circle cx="973.1" cy="380.3" r="2.9" fill="#fff" stroke="#7043c0" stroke-width="1.6"/><circle cx="981.5" cy="358.0" r="2.9" fill="#fff" stroke="#7043c0" stroke-width="1.6"/><circle cx="989.9" cy="374.4" r="2.9" fill="#fff" stroke="#7043c0" stroke-width="1.6"/><circle cx="998.3" cy="422.9" r="2.9" fill="#fff" stroke="#7043c0" stroke-width="1.6"/><circle cx="1006.7" cy="449.9" r="2.9" fill="#fff" stroke="#7043c0" stroke-width="1.6"/><circle cx="1015.1" cy="472.3" r="2.9" fill="#fff" stroke="#7043c0" stroke-width="1.6"/><circle cx="1023.4" cy="460.2" r="2.9" fill="#fff" stroke="#7043c0" stroke-width="1.6"/>
<circle cx="268.7" cy="479.6" r="3.5" fill="#fff" stroke="#2f7cf6" stroke-width="1.6"/><circle cx="277.1" cy="479.6" r="3.5" fill="#fff" stroke="#2f7cf6" stroke-width="1.6"/><circle cx="285.5" cy="479.6" r="3.5" fill="#fff" stroke="#2f7cf6" stroke-width="1.6"/><circle cx="293.9" cy="479.6" r="3.5" fill="#fff" stroke="#2f7cf6" stroke-width="1.6"/><circle cx="302.2" cy="479.6" r="3.5" fill="#fff" stroke="#2f7cf6" stroke-width="1.6"/><circle cx="310.6" cy="479.6" r="3.5" fill="#fff" stroke="#2f7cf6" stroke-width="1.6"/><circle cx="319.0" cy="479.6" r="3.5" fill="#fff" stroke="#2f7cf6" stroke-width="1.6"/><circle cx="327.4" cy="479.6" r="3.5" fill="#fff" stroke="#2f7cf6" stroke-width="1.6"/><circle cx="335.8" cy="479.6" r="3.5" fill="#fff" stroke="#2f7cf6" stroke-width="1.6"/><circle cx="344.2" cy="479.6" r="3.5" fill="#fff" stroke="#2f7cf6" stroke-width="1.6"/><circle cx="352.6" cy="479.6" r="3.5" fill="#fff" stroke="#2f7cf6" stroke-width="1.6"/><circle cx="360.9" cy="479.6" r="3.5" fill="#fff" stroke="#2f7cf6" stroke-width="1.6"/><circle cx="369.3" cy="479.6" r="3.5" fill="#fff" stroke="#2f7cf6" stroke-width="1.6"/><circle cx="377.7" cy="479.6" r="3.5" fill="#fff" stroke="#2f7cf6" stroke-width="1.6"/><circle cx="386.1" cy="479.6" r="3.5" fill="#fff" stroke="#2f7cf6" stroke-width="1.6"/><circle cx="394.5" cy="479.6" r="3.5" fill="#fff" stroke="#2f7cf6" stroke-width="1.6"/><circle cx="402.9" cy="479.6" r="3.5" fill="#fff" stroke="#2f7cf6" stroke-width="1.6"/><circle cx="411.3" cy="479.6" r="3.5" fill="#fff" stroke="#2f7cf6" stroke-width="1.6"/><circle cx="419.6" cy="479.6" r="3.5" fill="#fff" stroke="#2f7cf6" stroke-width="1.6"/><circle cx="428.0" cy="479.6" r="3.5" fill="#fff" stroke="#2f7cf6" stroke-width="1.6"/><circle cx="436.4" cy="479.6" r="3.5" fill="#fff" stroke="#2f7cf6" stroke-width="1.6"/><circle cx="444.8" cy="479.6" r="3.5" fill="#fff" stroke="#2f7cf6" stroke-width="1.6"/><circle cx="453.2" cy="479.6" r="3.5" fill="#fff" stroke="#2f7cf6" stroke-width="1.6"/><circle cx="461.6" cy="479.6" r="3.5" fill="#fff" stroke="#2f7cf6" stroke-width="1.6"/><circle cx="470.0" cy="479.6" r="3.5" fill="#fff" stroke="#2f7cf6" stroke-width="1.6"/><circle cx="478.3" cy="479.6" r="3.5" fill="#fff" stroke="#2f7cf6" stroke-width="1.6"/><circle cx="486.7" cy="479.6" r="3.5" fill="#fff" stroke="#2f7cf6" stroke-width="1.6"/><circle cx="495.1" cy="479.6" r="3.5" fill="#fff" stroke="#2f7cf6" stroke-width="1.6"/><circle cx="503.5" cy="479.6" r="3.5" fill="#fff" stroke="#2f7cf6" stroke-width="1.6"/><circle cx="511.9" cy="479.6" r="3.5" fill="#fff" stroke="#2f7cf6" stroke-width="1.6"/><circle cx="520.3" cy="479.6" r="3.5" fill="#fff" stroke="#2f7cf6" stroke-width="1.6"/><circle cx="528.7" cy="479.6" r="3.5" fill="#fff" stroke="#2f7cf6" stroke-width="1.6"/><circle cx="537.1" cy="479.6" r="3.5" fill="#fff" stroke="#2f7cf6" stroke-width="1.6"/><circle cx="545.4" cy="479.6" r="3.5" fill="#fff" stroke="#2f7cf6" stroke-width="1.6"/><circle cx="553.8" cy="479.6" r="3.5" fill="#fff" stroke="#2f7cf6" stroke-width="1.6"/><circle cx="562.2" cy="479.6" r="3.5" fill="#fff" stroke="#2f7cf6" stroke-width="1.6"/><circle cx="570.6" cy="479.6" r="3.5" fill="#fff" stroke="#2f7cf6" stroke-width="1.6"/><circle cx="579.0" cy="479.6" r="3.5" fill="#fff" stroke="#2f7cf6" stroke-width="1.6"/><circle cx="587.4" cy="479.6" r="3.5" fill="#fff" stroke="#2f7cf6" stroke-width="1.6"/><circle cx="595.8" cy="479.6" r="3.5" fill="#fff" stroke="#2f7cf6" stroke-width="1.6"/><circle cx="604.1" cy="479.6" r="3.5" fill="#fff" stroke="#2f7cf6" stroke-width="1.6"/><circle cx="612.5" cy="479.6" r="3.5" fill="#fff" stroke="#2f7cf6" stroke-width="1.6"/><circle cx="620.9" cy="479.6" r="3.5" fill="#fff" stroke="#2f7cf6" stroke-width="1.6"/><circle cx="629.3" cy="479.6" r="3.5" fill="#fff" stroke="#2f7cf6" stroke-width="1.6"/><circle cx="637.7" cy="479.6" r="3.5" fill="#fff" stroke="#2f7cf6" stroke-width="1.6"/><circle cx="646.1" cy="479.6" r="3.5" fill="#fff" stroke="#2f7cf6" stroke-width="1.6"/><circle cx="654.5" cy="479.6" r="3.5" fill="#fff" stroke="#2f7cf6" stroke-width="1.6"/><circle cx="662.8" cy="479.6" r="3.5" fill="#fff" stroke="#2f7cf6" stroke-width="1.6"/><circle cx="671.2" cy="479.6" r="3.5" fill="#fff" stroke="#2f7cf6" stroke-width="1.6"/><circle cx="679.6" cy="479.6" r="3.5" fill="#fff" stroke="#2f7cf6" stroke-width="1.6"/><circle cx="688.0" cy="479.6" r="3.5" fill="#fff" stroke="#2f7cf6" stroke-width="1.6"/><circle cx="696.4" cy="479.6" r="3.5" fill="#fff" stroke="#2f7cf6" stroke-width="1.6"/><circle cx="704.8" cy="479.6" r="3.5" fill="#fff" stroke="#2f7cf6" stroke-width="1.6"/><circle cx="713.2" cy="479.6" r="3.5" fill="#fff" stroke="#2f7cf6" stroke-width="1.6"/><circle cx="721.5" cy="479.6" r="3.5" fill="#fff" stroke="#2f7cf6" stroke-width="1.6"/><circle cx="729.9" cy="479.6" r="3.5" fill="#fff" stroke="#2f7cf6" stroke-width="1.6"/><circle cx="738.3" cy="479.6" r="3.5" fill="#fff" stroke="#2f7cf6" stroke-width="1.6"/><circle cx="746.7" cy="479.6" r="3.5" fill="#fff" stroke="#2f7cf6" stroke-width="1.6"/><circle cx="755.1" cy="479.6" r="3.5" fill="#fff" stroke="#2f7cf6" stroke-width="1.6"/><circle cx="763.5" cy="479.6" r="3.5" fill="#fff" stroke="#2f7cf6" stroke-width="1.6"/><circle cx="771.9" cy="479.6" r="3.5" fill="#fff" stroke="#2f7cf6" stroke-width="1.6"/><circle cx="780.2" cy="479.6" r="3.5" fill="#fff" stroke="#2f7cf6" stroke-width="1.6"/><circle cx="788.6" cy="479.6" r="3.5" fill="#fff" stroke="#2f7cf6" stroke-width="1.6"/><circle cx="797.0" cy="479.6" r="3.5" fill="#fff" stroke="#2f7cf6" stroke-width="1.6"/><circle cx="805.4" cy="479.6" r="3.5" fill="#fff" stroke="#2f7cf6" stroke-width="1.6"/><circle cx="813.8" cy="479.6" r="3.5" fill="#fff" stroke="#2f7cf6" stroke-width="1.6"/><circle cx="822.2" cy="479.6" r="3.5" fill="#fff" stroke="#2f7cf6" stroke-width="1.6"/><circle cx="830.6" cy="479.6" r="3.5" fill="#fff" stroke="#2f7cf6" stroke-width="1.6"/><circle cx="838.9" cy="479.6" r="3.5" fill="#fff" stroke="#2f7cf6" stroke-width="1.6"/><circle cx="847.3" cy="479.6" r="3.5" fill="#fff" stroke="#2f7cf6" stroke-width="1.6"/><circle cx="855.7" cy="479.6" r="3.5" fill="#fff" stroke="#2f7cf6" stroke-width="1.6"/><circle cx="864.1" cy="479.6" r="3.5" fill="#fff" stroke="#2f7cf6" stroke-width="1.6"/><circle cx="872.5" cy="479.6" r="3.5" fill="#fff" stroke="#2f7cf6" stroke-width="1.6"/><circle cx="880.9" cy="479.6" r="3.5" fill="#fff" stroke="#2f7cf6" stroke-width="1.6"/><circle cx="889.3" cy="479.6" r="3.5" fill="#fff" stroke="#2f7cf6" stroke-width="1.6"/><circle cx="897.6" cy="479.6" r="3.5" fill="#fff" stroke="#2f7cf6" stroke-width="1.6"/><circle cx="906.0" cy="479.6" r="3.5" fill="#fff" stroke="#2f7cf6" stroke-width="1.6"/><circle cx="914.4" cy="479.6" r="3.5" fill="#fff" stroke="#2f7cf6" stroke-width="1.6"/><circle cx="922.8" cy="479.6" r="3.5" fill="#fff" stroke="#2f7cf6" stroke-width="1.6"/><circle cx="931.2" cy="479.6" r="3.5" fill="#fff" stroke="#2f7cf6" stroke-width="1.6"/><circle cx="939.6" cy="479.6" r="3.5" fill="#fff" stroke="#2f7cf6" stroke-width="1.6"/><circle cx="948.0" cy="479.6" r="3.5" fill="#fff" stroke="#2f7cf6" stroke-width="1.6"/><circle cx="956.4" cy="479.6" r="3.5" fill="#fff" stroke="#2f7cf6" stroke-width="1.6"/><circle cx="964.7" cy="479.6" r="3.5" fill="#fff" stroke="#2f7cf6" stroke-width="1.6"/><circle cx="973.1" cy="479.6" r="3.5" fill="#fff" stroke="#2f7cf6" stroke-width="1.6"/><circle cx="981.5" cy="479.6" r="3.5" fill="#fff" stroke="#2f7cf6" stroke-width="1.6"/><circle cx="989.9" cy="479.6" r="3.5" fill="#fff" stroke="#2f7cf6" stroke-width="1.6"/><circle cx="998.3" cy="479.6" r="3.5" fill="#fff" stroke="#2f7cf6" stroke-width="1.6"/><circle cx="1006.7" cy="479.6" r="3.5" fill="#fff" stroke="#2f7cf6" stroke-width="1.6"/><circle cx="1015.1" cy="479.6" r="3.5" fill="#fff" stroke="#2f7cf6" stroke-width="1.6"/><circle cx="1023.4" cy="479.6" r="3.5" fill="#fff" stroke="#2f7cf6" stroke-width="1.6"/>
<circle cx="360.9" cy="474.8" r="3.3" fill="#fff" stroke="#3a7cf5" stroke-width="1.6"/>
</g>
<rect x="1044.5" y="324.1" width="11.3" height="2.2" fill="#3f7ef5"/>
<text x="1060.6" y="329.1" font-size="10.8" fill="#a3a3a3">Likes</text>
<rect x="1044.5" y="338.1" width="11.3" height="2.2" fill="#17b6cf"/>
<text x="1060.6" y="343.1" font-size="10.8" fill="#a3a3a3">Dislikes</text>
<rect x="1044.5" y="352.1" width="11.3" height="2.2" fill="#1a9488"/>
<text x="1060.6" y="357.1" font-size="10.8" fill="#a3a3a3">Views</text>
<rect x="1044.5" y="366.1" width="11.3" height="2.2" fill="#6a3fb8"/>
<text x="1060.6" y="371.1" font-size="10.8" fill="#a3a3a3">Reads</text>
<rect x="1044.5" y="380.1" width="11.3" height="2.2" fill="#2f7cf6"/>
<text x="1060.6" y="385.1" font-size="10.8" fill="#a3a3a3">Avg. Time Spent(min)</text>
<rect x="887.4" y="424.5" width="109.7" height="117.1" rx="2" fill="#5a5a5a"/>
<text x="942.3" y="438.3" text-anchor="middle" font-size="10.5" font-weight="bold" fill="#fff">9/1/2022</text>
<rect x="895.8" y="449.5" width="10.6" height="2" fill="#3f7ef5"/>
<text x="912.3" y="454.3" font-size="9.7" font-weight="bold" fill="#f2f2f2">Likes</text>
<text x="968.6" y="454.3" font-size="9.7" font-weight="bold" fill="#f2f2f2">5</text>
<rect x="895.8" y="465.7" width="10.6" height="2" fill="#17b6cf"/>
<text x="912.3" y="470.5" font-size="9.7" font-weight="bold" fill="#f2f2f2">Dislikes</text>
<text x="968.6" y="470.5" font-size="9.7" font-weight="bold" fill="#f2f2f2">1</text>
<rect x="895.8" y="482.0" width="10.6" height="2" fill="#1a9488"/>
<text x="912.3" y="486.8" font-size="9.7" font-weight="bold" fill="#f2f2f2">Views</text>
<text x="968.6" y="486.8" font-size="9.7" font-weight="bold" fill="#f2f2f2">429</text>
<rect x="895.8" y="498.4" width="10.6" height="2" fill="#6a3fb8"/>
<text x="912.3" y="503.2" font-size="9.7" font-weight="bold" fill="#f2f2f2">Reads</text>
<text x="968.6" y="503.2" font-size="9.7" font-weight="bold" fill="#f2f2f2">223</text>
<rect x="895.8" y="522" width="10.6" height="2" fill="#2f7cf6"/>
<text x="912.3" y="519.7" font-size="9.7" font-weight="bold" fill="#f2f2f2">Avg. Time</text>
<text x="912.3" y="533.8" font-size="9.7" font-weight="bold" fill="#f2f2f2">Spent(min)</text>
<text x="968.6" y="526.8" font-size="9.7" font-weight="bold" fill="#f2f2f2">1.42</text>
</svg>
<div class="a" style="left:0;top:612px;width:1200px;height:4px;background:#a6a6a6"></div>
</body></html>
